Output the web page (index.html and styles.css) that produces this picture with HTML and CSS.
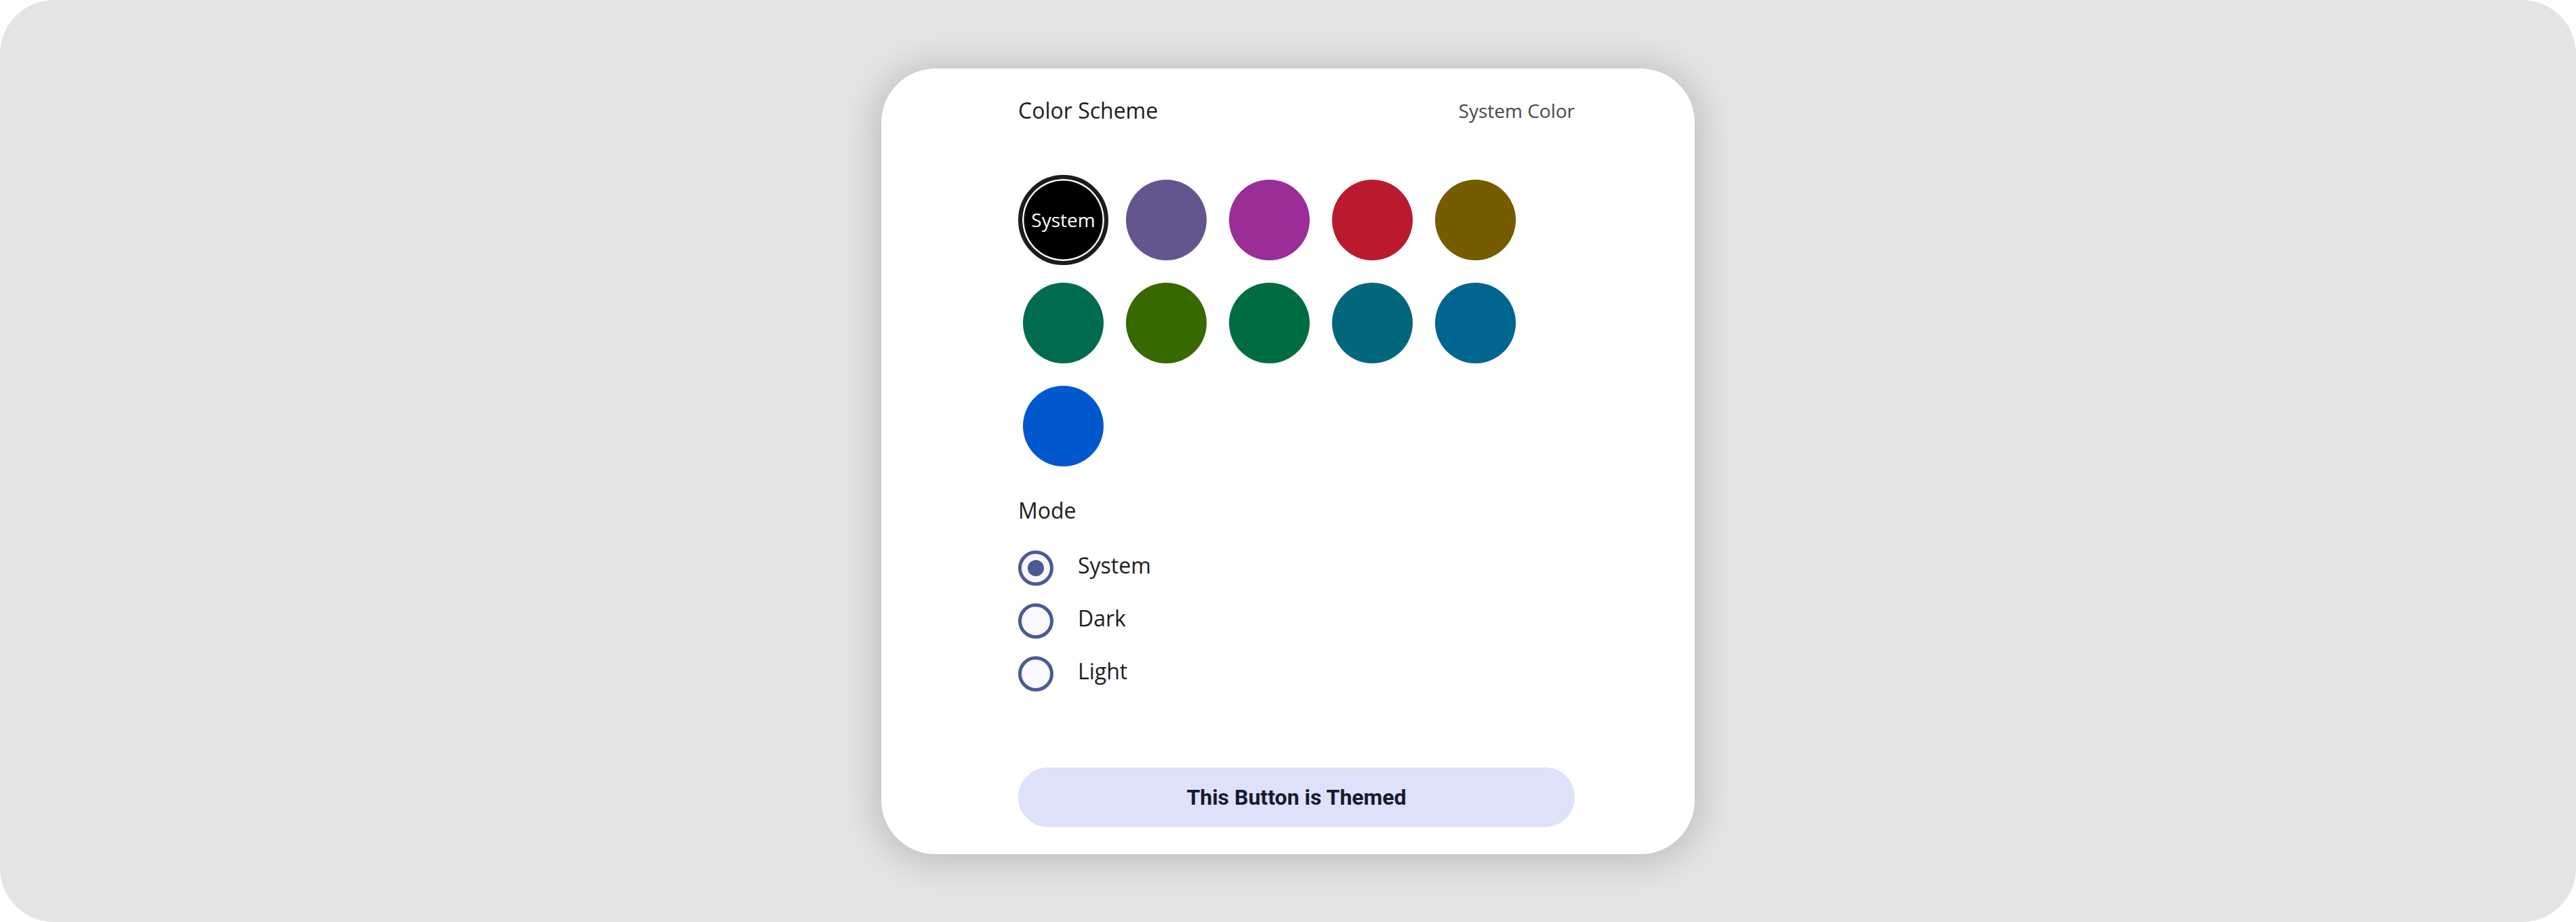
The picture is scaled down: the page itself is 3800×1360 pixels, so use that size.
FILE: index.html
```html
<!DOCTYPE html>
<html lang="en">
<head>
<meta charset="utf-8">
<title>Color Scheme</title>
<link rel="stylesheet" href="styles.css">
</head>
<body>
<div class="frame">
  <div class="card">
    <div class="content">
      <div class="header">
        <span class="title">Color Scheme</span>
        <span class="subtitle">System Color</span>
      </div>
      <div class="swatches">
        <div class="cell"><div class="swatch selected"><span>System</span></div></div>
        <div class="cell"><div class="swatch c1"></div></div>
        <div class="cell"><div class="swatch c2"></div></div>
        <div class="cell"><div class="swatch c3"></div></div>
        <div class="cell"><div class="swatch c4"></div></div>
        <div class="cell"><div class="swatch c5"></div></div>
        <div class="cell"><div class="swatch c6"></div></div>
        <div class="cell"><div class="swatch c7"></div></div>
        <div class="cell"><div class="swatch c8"></div></div>
        <div class="cell"><div class="swatch c9"></div></div>
        <div class="cell"><div class="swatch c10"></div></div>
      </div>
      <div class="mode-title">Mode</div>
      <div class="radios">
        <div class="radio-row"><span class="radio checked"><span class="dot"></span></span><span class="radio-label">System</span></div>
        <div class="radio-row"><span class="radio"></span><span class="radio-label">Dark</span></div>
        <div class="radio-row"><span class="radio"></span><span class="radio-label">Light</span></div>
      </div>
      <button class="themed">This Button is Themed</button>
    </div>
  </div>
</div>
</body>
</html>
```
FILE: styles.css
```css
html, body {
  margin: 0;
  padding: 0;
  background: #ffffff;
}
.frame {
  width: 3800px;
  height: 1360px;
  background: #e4e4e4;
  border-radius: 80px;
  display: flex;
  align-items: center;
  justify-content: center;
  font-family: "Open Sans", "Noto Sans", sans-serif;
  color: #1c1b1f;
}
.card {
  width: 1200px;
  box-sizing: border-box;
  background: #ffffff;
  border-radius: 80px;
  padding: 40px 177px 40px 202px;
  box-shadow: 0 4px 50px 10px rgba(0, 0, 0, 0.16);
}
.content {
  width: 821px;
  display: flex;
  flex-direction: column;
}
.header {
  display: flex;
  justify-content: space-between;
  align-items: center;
  height: 44px;
}
.title {
  font-size: 32px;
  line-height: 44px;
  color: #1c1b1f;
}
.subtitle {
  font-size: 28px;
  line-height: 44px;
  color: #49454f;
}
.swatches {
  margin-top: 73px;
  display: grid;
  grid-template-columns: repeat(5, 133px);
  grid-auto-rows: 133px;
  gap: 19px;
}
.cell {
  display: flex;
  align-items: center;
  justify-content: center;
}
.swatch {
  width: 119px;
  height: 119px;
  border-radius: 50%;
}
.swatch.selected {
  width: 133px;
  height: 133px;
  box-sizing: border-box;
  border: 6px solid #1c1b1f;
  background: #000000;
  box-shadow: inset 0 0 0 2.5px #ffffff;
  display: flex;
  align-items: center;
  justify-content: center;
}
.swatch.selected span {
  color: #ffffff;
  font-size: 28px;
  line-height: 38px;
}
.c1 { background: #65558f; }
.c2 { background: #9a2d98; }
.c3 { background: #ba1a2f; }
.c4 { background: #765b00; }
.c5 { background: #006c4f; }
.c6 { background: #376900; }
.c7 { background: #006d40; }
.c8 { background: #02677d; }
.c9 { background: #00658f; }
.c10 { background: #0058cf; }
.mode-title {
  margin-top: 36px;
  font-size: 32px;
  line-height: 44px;
}
.radios {
  margin-top: 24px;
  display: flex;
  flex-direction: column;
}
.radio-row {
  height: 78px;
  display: flex;
  align-items: center;
}
.radio {
  width: 52px;
  height: 52px;
  box-sizing: border-box;
  border: 5px solid #4a5b92;
  border-radius: 50%;
  background: #faf8ff;
  display: flex;
  align-items: center;
  justify-content: center;
}
.dot {
  width: 24px;
  height: 24px;
  border-radius: 50%;
  background: #4a5b92;
}
.radio-label {
  margin-left: 36px;
  margin-bottom: 8px;
  font-size: 32px;
  line-height: 44px;
  color: #1c1b1f;
}
.themed {
  margin-top: 99px;
  height: 88px;
  width: 821px;
  border: none;
  border-radius: 44px;
  background: #dde1f9;
  font-family: Roboto, "Liberation Sans", sans-serif;
  font-weight: 700;
  font-size: 32px;
  color: #151b2c;
  padding: 0;
}
```
